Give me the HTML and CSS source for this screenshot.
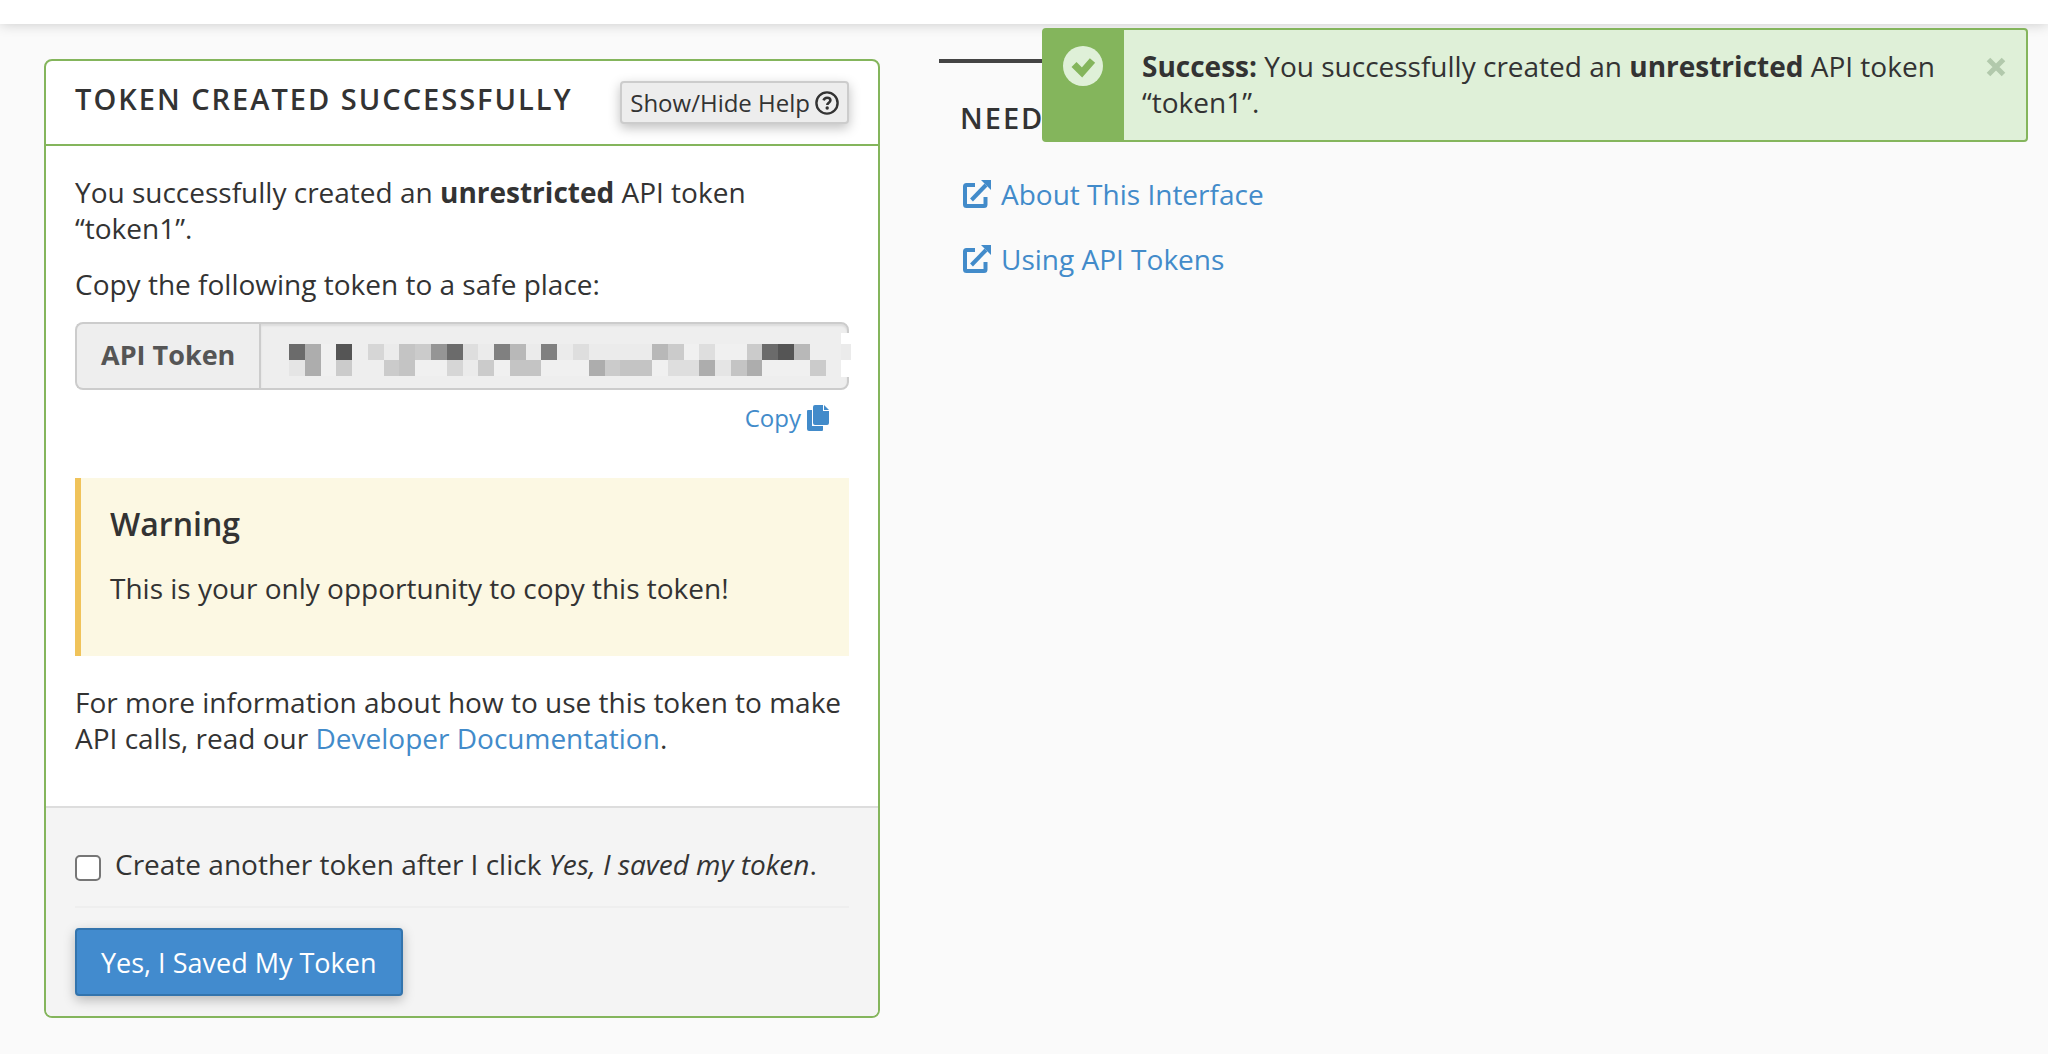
FILE: index.html
```html
<!DOCTYPE html>
<html lang="en">
<head>
<meta charset="utf-8">
<title>Manage API Tokens</title>
<link rel="stylesheet" href="styles.css">
</head>
<body>
<header class="topbar"></header>

<div class="alert" role="alert">
    <div class="alert-icon">
        <svg viewBox="0 0 40 40" width="40" height="40">
            <circle cx="20" cy="20" r="20" fill="#dff0d8"/>
            <path d="M11 18.500l8 8L29.500 14.500" fill="none" stroke="#84b55c" stroke-width="7"/>
        </svg>
    </div>
    <div class="alert-message"><strong>Success:</strong> You successfully created an <strong>unrestricted</strong> API token “token1”.</div>
    <button type="button" class="alert-close" aria-label="Close">
        <svg viewBox="0 0 20 20" width="20" height="20"><path d="M2.5 2.5l15 15M17.5 2.5l-15 15" stroke="#b2c9ac" stroke-width="5"/></svg>
    </button>
</div>

<main class="content">
    <section class="panel">
        <div class="panel-heading">
            <h2 class="title">Token Created Successfully</h2>
            <button type="button" class="btn-help">Show/Hide Help
                <svg viewBox="0 0 24 24" width="24" height="24">
                    <circle cx="12" cy="12" r="10.6" fill="none" stroke="#333" stroke-width="2.4"/>
                    <path d="M8.6 9.3c.5-1.7 1.7-2.6 3.5-2.6 1.9 0 3.3 1 3.3 2.6 0 2.4-3.1 2.4-3.1 4.6" fill="none" stroke="#333" stroke-width="2.6"/>
                    <circle cx="12.2" cy="17" r="1.7" fill="#333"/>
                </svg>
            </button>
        </div>
        <div class="panel-body">
            <p>You successfully created an <strong>unrestricted</strong> API token “token1”.</p>
            <p>Copy the following token to a safe place:</p>
            <div class="input-group">
                <label for="token">API Token</label>
                <input type="text" id="token" readonly>
                <!-- masked token value -->
                <svg class="mask" viewBox="0 0 562 44" width="562" height="44" shape-rendering="crispEdges">
                    <path fill="#fff" d="M552 0h10v11h-10zM552 27h10v17h-10z"/>
                    <path fill="#ebebeb" d="M552 11h10v16h-10z"/>
                    <g transform="translate(0 11) scale(15.78 16)">
                        <path fill="#6b6b6b" d="M0 0h1v1h-1zM10 0h1v1h-1zM30 0h1v1h-1z"/>
                        <path fill="#555" d="M3 0h1v1h-1zM31 0h1v1h-1z"/>
                        <path fill="#808080" d="M13 0h1v1h-1zM16 0h1v1h-1z"/>
                        <path fill="#959595" d="M9 0h1v1h-1z"/>
                        <path fill="#adadad" d="M1 0h1v2h-1zM19 1h1v1h-1zM26 1h1v1h-1zM29 1h1v1h-1z"/>
                        <path fill="#b8b8b8" d="M14 0h1v1h-1zM23 0h1v1h-1zM32 0h1v1h-1z"/>
                        <path fill="#c4c4c4" d="M7 0h1v2h-1zM14 1h2v1h-2zM21 1h2v1h-2zM28 1h1v1h-1z"/>
                        <path fill="#cbcbcb" d="M8 0h1v1h-1zM24 0h1v1h-1zM3 1h1v1h-1zM6 1h1v1h-1zM12 1h1v1h-1zM20 1h1v1h-1zM33 1h1v1h-1zM29 0h1v1h-1z"/>
                        <path fill="#d6d6d6" d="M5 0h1v1h-1zM10 1h1v1h-1z"/>
                        <path fill="#dedede" d="M11 0h1v1h-1zM18 0h1v1h-1zM26 0h1v1h-1zM24 1h2v1h-2z"/>
                        <path fill="#e5e5e5" d="M0 1h1v1h-1zM27 1h1v1h-1z"/>
                        <path fill="#ebebeb" d="M6 0h1v1h-1zM12 0h1v1h-1zM15 0h1v1h-1zM17 0h1v1h-1zM19 0h4v1h-4zM11 1h1v1h-1z"/>
                        <path fill="#f0f0f0" d="M2 0h1v2h-1zM8 1h2v1h-2zM13 1h1v1h-1zM16 1h3v1h-3zM23 1h1v1h-1zM25 0h1v1h-1zM27 0h2v1h-2zM30 1h3v1h-3z"/>
                    </g>
                </svg>
            </div>
            <div class="copy-row">
                <a href="#" class="copy">Copy
                    <svg viewBox="0 0 22 26" width="22" height="26" fill="#428bca">
                        <path d="M2 5h3v16h11v4a1 1 0 0 1-1 1H2a2 2 0 0 1-2-2V6a1 1 0 0 1 1-1z"/>
                        <path d="M8 0h8v6h6v12a2 2 0 0 1-2 2H8a2 2 0 0 1-2-2V2a2 2 0 0 1 2-2z"/>
                        <path d="M17 0l5 5h-5z"/>
                    </svg>
                </a>
            </div>
            <div class="callout">
                <h3>Warning</h3>
                <p>This is your only opportunity to copy this token!</p>
            </div>
            <p>For more information about how to use this token to make API calls, read our <a href="#">Developer Documentation</a>.</p>
        </div>
        <div class="panel-footer">
            <div class="checkbox">
                <input type="checkbox" id="another">
                <label for="another">Create another token after I click <em>Yes, I saved my token</em>.</label>
            </div>
            <hr>
            <button type="button" class="btn-primary">Yes, I Saved My Token</button>
        </div>
    </section>

    <aside class="help">
        <h2 class="title">Need Help?</h2>
        <ul>
            <li><a href="#">
                <svg viewBox="0 0 28 28" width="28" height="28">
                    <path d="M12 5H3.5A1.5 1.5 0 0 0 2 6.500V24.500A1.500 1.500 0 0 0 3.500 26H21a1.500 1.500 0 0 0 1.500-1.500V17" fill="none" stroke="#428bca" stroke-width="4"/>
                    <path d="M8.500 20L23 5" stroke="#428bca" stroke-width="4"/>
                    <path d="M18 0h10v10z" fill="#428bca"/>
                </svg>About This Interface</a></li>
            <li><a href="#">
                <svg viewBox="0 0 28 28" width="28" height="28">
                    <path d="M12 5H3.5A1.5 1.5 0 0 0 2 6.500V24.500A1.500 1.500 0 0 0 3.500 26H21a1.500 1.500 0 0 0 1.500-1.500V17" fill="none" stroke="#428bca" stroke-width="4"/>
                    <path d="M8.500 20L23 5" stroke="#428bca" stroke-width="4"/>
                    <path d="M18 0h10v10z" fill="#428bca"/>
                </svg>Using API Tokens</a></li>
        </ul>
    </aside>
</main>
</body>
</html>
```

FILE: styles.css
```css
*{box-sizing:border-box;}
body{margin:0;background:#fafafa;color:#333;font:28px/36px "Open Sans",sans-serif;}
h2,h3,p,ul{margin:0;padding:0;}
ul{list-style:none;}
a{color:#428bca;text-decoration:none;}
button,input{font-family:inherit;}
svg{flex:none;}

.topbar{height:24px;background:#fff;box-shadow:0 0 14px rgba(0,0,0,.2);}
.content{display:grid;grid-template-columns:836fr 1089fr;gap:59px;align-items:start;padding:35px 20px 36px 44px;}
.title{font-size:29px;line-height:36px;font-weight:600;letter-spacing:2px;text-transform:uppercase;}

/* panel */
.panel{background:#fff;border:2px solid #84b55c;border-radius:8px;overflow:hidden;}
.panel-heading{display:flex;justify-content:space-between;align-items:flex-start;padding:20px 29px;border-bottom:2px solid #84b55c;}
.btn-help{display:flex;align-items:center;gap:5px;height:43px;padding:0 8px;border:2px solid #ccc;border-radius:4px;background:#ededed;color:#333;font-size:24px;white-space:nowrap;box-shadow:0 4px 12px rgba(0,0,0,.25);}
.panel-body{padding:28px 29px 30px;}
.panel-body p{margin-bottom:20px;}

.input-group{position:relative;display:flex;height:68px;}
.input-group label{padding:13px 24px;border:2px solid #ccc;border-right:0;border-radius:8px 0 0 8px;background:#eee;color:#555;font-size:27px;font-weight:700;white-space:nowrap;}
.input-group input{flex:1;min-width:0;padding:0 24px;border:2px solid #ccc;border-radius:0 8px 8px 0;background:#eee;box-shadow:inset 0 2px 2px rgba(0,0,0,.08);font-size:28px;}
.mask{position:absolute;top:11px;right:-2px;}

.copy-row{display:flex;justify-content:flex-end;padding:10px 20px 42px 0;}
.copy{display:flex;align-items:center;gap:6px;font-size:24px;}

.callout{margin-bottom:28px;padding:28px 29px 30px;border-left:6px solid #f0c35a;background:#fcf8e3;}
.callout h3{margin-bottom:28px;font-size:32px;font-weight:600;}

.panel-footer{padding:38px 29px 20px;border-top:2px solid #ddd;background:#f4f4f4;}
.checkbox{display:flex;align-items:center;gap:14px;}
.checkbox input{flex:none;appearance:none;width:26px;height:26px;margin:8px 0 0;border:2px solid #767676;border-radius:5px;background:#fff;}
.panel-footer hr{margin:24px 0 20px;border:0;border-top:2px solid #eee;}
.btn-primary{height:68px;padding:0 24px;border:2px solid #3374ad;border-radius:4px;background:#428bce;color:#fff;font-size:27px;box-shadow:0 4px 12px rgba(0,0,0,.25);}

/* help column */
.help{padding:37px 21px 0;border-top:4px solid #444;}
.help ul{margin-top:40px;}
.help li{margin-bottom:29px;}
.help a{display:flex;align-items:center;gap:10px;margin-left:3px;}

/* growl notice, stays above the page */
.alert{position:absolute;z-index:10;top:28px;right:20px;display:flex;width:calc(50% - 38px);border:2px solid #84b55c;border-radius:4px;background:#dff0d8;}
.alert-icon{flex:none;width:80px;padding:16px 0 0 19px;background:#84b55c;}
.alert-message{flex:1;padding:18px 18px 20px;}
.alert-close{align-self:flex-start;margin:27px 20px 0 0;padding:0;border:0;background:none;line-height:0;}
```
